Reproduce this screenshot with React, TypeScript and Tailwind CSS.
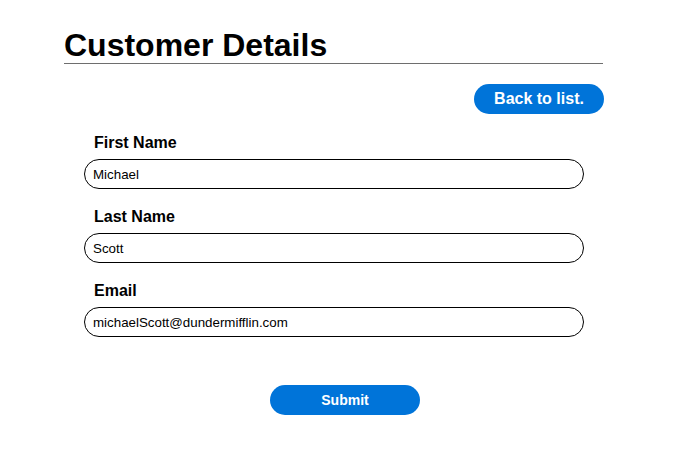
import React from 'react';

const fields = [
  { label: 'First Name', value: 'Michael' },
  { label: 'Last Name', value: 'Scott' },
  { label: 'Email', value: 'michaelScott@dundermifflin.com' },
];

export default function App() {
  return (
    <div className="min-h-screen bg-white text-black font-['Liberation_Sans',Arial,sans-serif]">
      <div className="ml-16 w-[539px] pt-[27px]">
        <h1 className="text-[32px] leading-[36px] font-bold">Customer Details</h1>
        <div className="h-px bg-[#6e6e6e]" />

        <div className="flex justify-end mt-5 -mr-px">
          <button className="h-[30px] w-[130px] rounded-full bg-[#0074d9] text-white text-base font-bold">
            Back to list.
          </button>
        </div>

        {/* form */}
        <form className="pl-5 mt-5">
          {fields.map((f) => (
            <div key={f.label} className="mb-[19px]">
              <label className="block pl-2.5 text-base leading-[18px] font-bold">{f.label}</label>
              <input
                className="mt-[7px] block h-[30px] w-[500px] rounded-full border border-black px-2 pt-px text-[13.333px] text-black outline-none"
                defaultValue={f.value}
              />
            </div>
          ))}

          <div className="flex justify-center pt-[29px] pl-[3px]">
            <button
              type="button"
              className="h-[30px] w-[150px] rounded-full bg-[#0074d9] text-white text-sm font-bold"
            >
              Submit
            </button>
          </div>
        </form>
      </div>
    </div>
  );
}
